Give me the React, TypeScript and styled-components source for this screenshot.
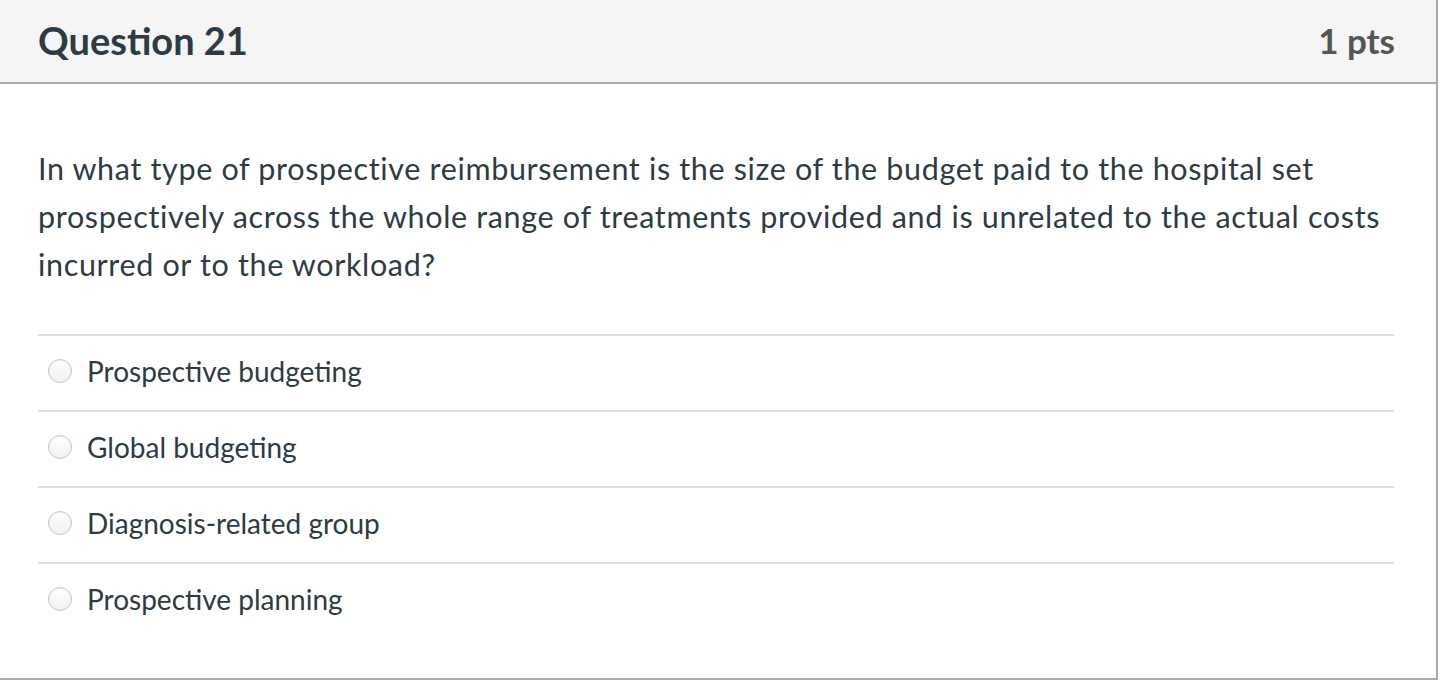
import React from 'react';
import styled, { createGlobalStyle } from 'styled-components';

const GlobalStyle = createGlobalStyle`
  html, body {
    margin: 0;
    padding: 0;
    background: #ffffff;
  }
  body {
    font-family: 'Lato', 'Noto Sans', sans-serif;
    color: #2d3b45;
  }
`;

const Panel = styled.div`
  width: 1436px;
  height: 678px;
  border-right: 2px solid #aaaaaa;
  border-bottom: 2px solid #aaaaaa;
  display: flex;
  flex-direction: column;
`;

const Header = styled.div`
  height: 80px;
  background: #f5f5f5;
  border-bottom: 2px solid #aaaaaa;
  display: flex;
  align-items: center;
  justify-content: space-between;
  padding: 0 41px 2px 38px;
  flex-shrink: 0;
`;

const Title = styled.h2`
  margin: 0;
  font-size: 38px;
  font-weight: 700;
  color: #2d3b45;
`;

const Points = styled.span`
  font-size: 35px;
  font-weight: 700;
  color: #555555;
`;

const Body = styled.div`
  padding: 60px 42px 0 38px;
`;

const QuestionText = styled.p`
  margin: 0 0 46px;
  font-size: 30.5px;
  letter-spacing: 0.66px;
  line-height: 48px;
  color: #2d3b45;
`;

const AnswerList = styled.div`
  display: flex;
  flex-direction: column;
`;

const AnswerRow = styled.label`
  box-sizing: content-box;
  height: 70px;
  border-top: 2px solid #dddddd;
  display: flex;
  align-items: center;
  gap: 15px;
  padding: 0 0 4px 10px;
  cursor: pointer;
`;

const Radio = styled.span`
  width: 24px;
  height: 24px;
  border-radius: 50%;
  box-sizing: border-box;
  border: 1px solid #c4c4c4;
  background: linear-gradient(#ffffff, #f2f2f2);
  box-shadow: inset 0 1px 2px rgba(0, 0, 0, 0.06);
  flex-shrink: 0;
`;

const AnswerText = styled.span`
  font-size: 28px;
  color: #2d3b45;
`;

const answers = [
  'Prospective budgeting',
  'Global budgeting',
  'Diagnosis-related group',
  'Prospective planning',
];

const App = () => {
  return (
    <>
      <GlobalStyle />
      <Panel>
        <Header>
          <Title>Question 21</Title>
          <Points>1 pts</Points>
        </Header>
        <Body>
          <QuestionText>
            In what type of prospective reimbursement is the size of the budget
            paid to the hospital set prospectively across the whole range of
            treatments provided and is unrelated to the actual costs incurred
            or to the workload?
          </QuestionText>
          <AnswerList>
            {answers.map((answer) => (
              <AnswerRow key={answer}>
                <Radio />
                <AnswerText>{answer}</AnswerText>
              </AnswerRow>
            ))}
          </AnswerList>
        </Body>
      </Panel>
    </>
  );
};

export default App;
